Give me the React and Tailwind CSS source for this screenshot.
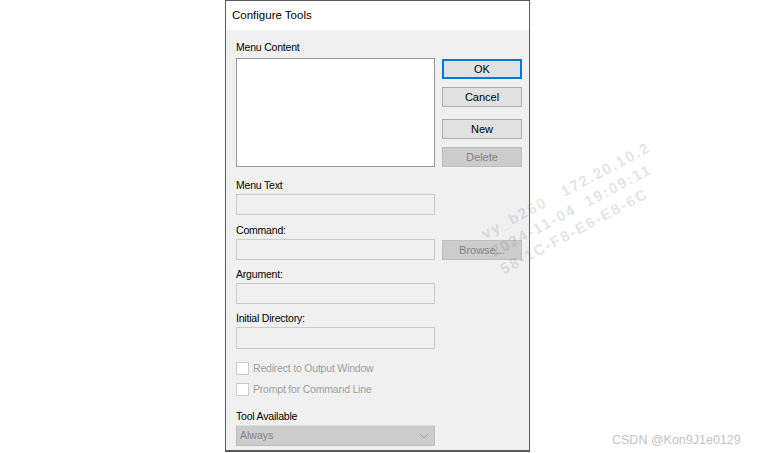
import React from 'react'

const font = { fontFamily: '"Liberation Sans", Arial, sans-serif' }

function Btn({ children, primary, disabled, className = '' }) {
  let look = 'bg-[#e1e1e1] border border-[#adadad] text-black'
  if (primary) look = 'bg-[#e1e1e1] border-2 border-[#0078d7] text-black'
  if (disabled) look = 'bg-[#cccccc] border border-[#bfbfbf] text-[#838383]'
  return (
    <div className={`h-[20px] w-[80px] flex items-center justify-center text-[11px] ${look} ${className}`}>
      {children}
    </div>
  )
}

function Label({ children, className = '' }) {
  return (
    <div className={`h-[14px] leading-[14px] text-[10.5px] tracking-[-0.2px] text-black ${className}`}>
      {children}
    </div>
  )
}

function Field({ className = '' }) {
  return <div className={`w-[199px] h-[21px] bg-[#f0f0f0] border border-[#cccccc] ${className}`} />
}

function Check({ children, className = '' }) {
  return (
    <div className={`flex items-center gap-[4px] ${className}`}>
      <div className="w-[13px] h-[13px] bg-white border border-[#cccccc]" />
      <span className="text-[10.5px] leading-[13px] tracking-[-0.2px] text-[#a0a0a0]">{children}</span>
    </div>
  )
}

export default function App() {
  return (
    <div className="relative w-[763px] h-[453px] bg-white overflow-hidden" style={font}>
      <div className="pl-[225px]">
        <div className="w-[305px] h-[452px] border border-[#5a5a5a] border-b-2 flex flex-col">
          <div className="h-[29px] bg-white flex items-center pl-[6px] text-[11.5px] text-black">
            Configure Tools
          </div>
          <div className="flex-1 bg-[#f0f0f0] pl-[10px] pt-[10px]">
            <Label>Menu Content</Label>
            <div className="mt-[4px] flex gap-[7px]">
              <div className="w-[199px] h-[109px] bg-white border border-[#9a9a9a]" />
              <div className="w-[80px] flex flex-col pt-[1px]">
                <Btn primary>OK</Btn>
                <Btn className="mt-[8px]">Cancel</Btn>
                <Btn className="mt-[12px]">New</Btn>
                <Btn disabled className="mt-[8px]">Delete</Btn>
              </div>
            </div>

            <Label className="mt-[11px]">Menu Text</Label>
            <Field className="mt-[2px]" />

            <Label className="mt-[8px]">Command:</Label>
            <div className="mt-[2px] flex gap-[7px]">
              <Field />
              <Btn disabled className="mt-[1px]">Browse...</Btn>
            </div>

            <Label className="mt-[7px]">Argument:</Label>
            <Field className="mt-[2px]" />

            <Label className="mt-[7px]">Initial Directory:</Label>
            <Field className="mt-[2px] h-[22px]" />

            <Check className="mt-[13px]">Redirect to Output Window</Check>
            <Check className="mt-[8px]">Prompt for Command Line</Check>

            <Label className="mt-[13px]">Tool Available</Label>
            <div className="mt-[2px] w-[199px] h-[21px] bg-[#cccccc] border border-[#bfbfbf] border-t-[#e0e0e0] flex items-center justify-between pl-[3px] pr-[5px]">
              <span className="text-[10.5px] text-[#838383]">Always</span>
              <svg width="10" height="6" viewBox="0 0 10 6">
                <polyline points="1,1 5,5 9,1" fill="none" stroke="#a0a0a0" strokeWidth="1" />
              </svg>
            </div>
          </div>
        </div>
      </div>

      <div className="absolute left-[478px] top-[226px] origin-top-left -rotate-[28deg] whitespace-pre font-semibold text-[15px] leading-[20px] tracking-[1.8px] text-[#78787836] pointer-events-none">
        <div>{'vy_b260   172.20.10.2'}</div>
        <div>{'2024-11-04  19:09:11'}</div>
        <div>{'58-1C-F8-E6-E8-6C'}</div>
      </div>

      <div className="absolute left-[612px] top-[431px] text-[12.5px] text-[#c4c4c4]">CSDN @Kon9J1e0129</div>
    </div>
  )
}
